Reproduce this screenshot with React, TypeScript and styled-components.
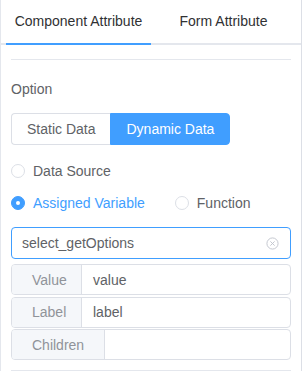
import { useState } from "react";
import styled, { createGlobalStyle } from "styled-components";

const GlobalStyle = createGlobalStyle`
  body {
    margin: 0;
    background: #fff;
    font-family: "Liberation Sans", Arial, sans-serif;
  }
`;

const Panel = styled.div`
  width: 302px;
  height: 371px;
  box-sizing: border-box;
  border-left: 1px solid #e4e7ed;
  border-right: 1px solid #dcdfe6;
  background: #fff;
  overflow: hidden;
`;

const TabBar = styled.div`
  display: flex;
  padding: 0 5px;
  border-bottom: 2px solid #e4e7ed;
`;

const Tab = styled.div<{ $active?: boolean }>`
  flex: 1;
  height: 45px;
  box-sizing: border-box;
  margin-bottom: -2px;
  line-height: 43px;
  text-align: center;
  font-size: 14px;
  color: #303133;
  border-bottom: 2px solid ${(p) => (p.$active ? "#409eff" : "transparent")};
  cursor: pointer;
`;

const Body = styled.div`
  padding: 0 10px;
`;

const Divider = styled.div<{ $top: number }>`
  height: 1px;
  background: #e4e7ed;
  margin-top: ${(p) => p.$top}px;
`;

const SectionTitle = styled.div`
  margin-top: 19px;
  font-size: 14px;
  line-height: 20px;
  color: #606266;
`;

const ButtonGroup = styled.div`
  display: inline-flex;
  margin-top: 14px;
  height: 32px;
`;

const GroupButton = styled.div<{ $active?: boolean }>`
  display: flex;
  align-items: center;
  padding: 0 15px;
  font-size: 14px;
  border: 1px solid ${(p) => (p.$active ? "#409eff" : "#dcdfe6")};
  background: ${(p) => (p.$active ? "#409eff" : "#fff")};
  color: ${(p) => (p.$active ? "#fff" : "#606266")};
  cursor: pointer;
  &:first-child {
    border-radius: 4px 0 0 4px;
    border-right: none;
  }
  &:last-child {
    border-radius: 0 4px 4px 0;
  }
`;

const RadioRow = styled.div<{ $top: number }>`
  display: flex;
  margin-top: ${(p) => p.$top}px;
  height: 20px;
`;

const Radio = styled.label<{ $checked?: boolean }>`
  display: flex;
  align-items: center;
  gap: 8px;
  margin-right: 30px;
  font-size: 14px;
  color: ${(p) => (p.$checked ? "#409eff" : "#606266")};
  cursor: pointer;
`;

const Dot = styled.span<{ $checked?: boolean }>`
  width: 14px;
  height: 14px;
  box-sizing: border-box;
  border-radius: 50%;
  border: 1px solid ${(p) => (p.$checked ? "#409eff" : "#dcdfe6")};
  background: ${(p) => (p.$checked ? "#409eff" : "#fff")};
  display: flex;
  align-items: center;
  justify-content: center;
  &::after {
    content: "";
    width: 4px;
    height: 4px;
    border-radius: 50%;
    background: #fff;
    display: ${(p) => (p.$checked ? "block" : "none")};
  }
`;

const InputBox = styled.div`
  margin-top: 14px;
  height: 32px;
  box-sizing: border-box;
  border: 1px solid #409eff;
  border-radius: 4px;
  display: flex;
  align-items: center;
  padding: 0 11px 0 10px;
  font-size: 14px;
  color: #606266;
`;

const InputText = styled.span`
  flex: 1;
`;

const FieldRow = styled.div<{ $top: number }>`
  display: flex;
  margin-top: ${(p) => p.$top}px;
  height: 31px;
  box-sizing: border-box;
  border: 1px solid #dcdfe6;
  border-radius: 4px;
  overflow: hidden;
  font-size: 14px;
`;

const Prepend = styled.div<{ $width?: number }>`
  ${(p) => (p.$width ? `width: ${p.$width}px;` : "")}
  box-sizing: border-box;
  padding: 0 20px;
  display: flex;
  align-items: center;
  background: #f5f7fa;
  color: #909399;
  border-right: 1px solid #dcdfe6;
`;

const FieldValue = styled.div`
  flex: 1;
  display: flex;
  align-items: center;
  padding: 0 11px;
  color: #606266;
`;

const ClearIcon = () => (
  <svg width="13" height="13" viewBox="0 0 14 14">
    <circle cx="7" cy="7" r="6" fill="none" stroke="#c0c4cc" strokeWidth="1" />
    <path d="M5 5 L9 9 M9 5 L5 9" stroke="#c0c4cc" strokeWidth="1" strokeLinecap="round" />
  </svg>
);

const fields = [
  { label: "Value", value: "value", width: 70 },
  { label: "Label", value: "label", width: 70 },
  { label: "Children", value: "" },
];

export default function App() {
  const [tab, setTab] = useState(0);
  const [mode, setMode] = useState("dynamic");
  const [source, setSource] = useState("variable");

  return (
    <Panel>
      <GlobalStyle />
      <TabBar>
        <Tab $active={tab === 0} onClick={() => setTab(0)}>
          Component Attribute
        </Tab>
        <Tab $active={tab === 1} onClick={() => setTab(1)}>
          Form Attribute
        </Tab>
      </TabBar>
      <Body>
        <Divider $top={14} />
        <SectionTitle>Option</SectionTitle>
        <ButtonGroup>
          <GroupButton $active={mode === "static"} onClick={() => setMode("static")}>
            Static Data
          </GroupButton>
          <GroupButton $active={mode === "dynamic"} onClick={() => setMode("dynamic")}>
            Dynamic Data
          </GroupButton>
        </ButtonGroup>
        <RadioRow $top={16}>
          <Radio $checked={source === "source"} onClick={() => setSource("source")}>
            <Dot $checked={source === "source"} />
            Data Source
          </Radio>
        </RadioRow>
        <RadioRow $top={12}>
          <Radio $checked={source === "variable"} onClick={() => setSource("variable")}>
            <Dot $checked={source === "variable"} />
            Assigned Variable
          </Radio>
          <Radio $checked={source === "function"} onClick={() => setSource("function")}>
            <Dot $checked={source === "function"} />
            Function
          </Radio>
        </RadioRow>
        <InputBox>
          <InputText>select_getOptions</InputText>
          <ClearIcon />
        </InputBox>
        {fields.map((f, i) => (
          <FieldRow key={f.label} $top={i === 0 ? 5 : 1.5}>
            <Prepend $width={f.width}>{f.label}</Prepend>
            <FieldValue>{f.value}</FieldValue>
          </FieldRow>
        ))}
        <Divider $top={10} />
      </Body>
    </Panel>
  );
}
